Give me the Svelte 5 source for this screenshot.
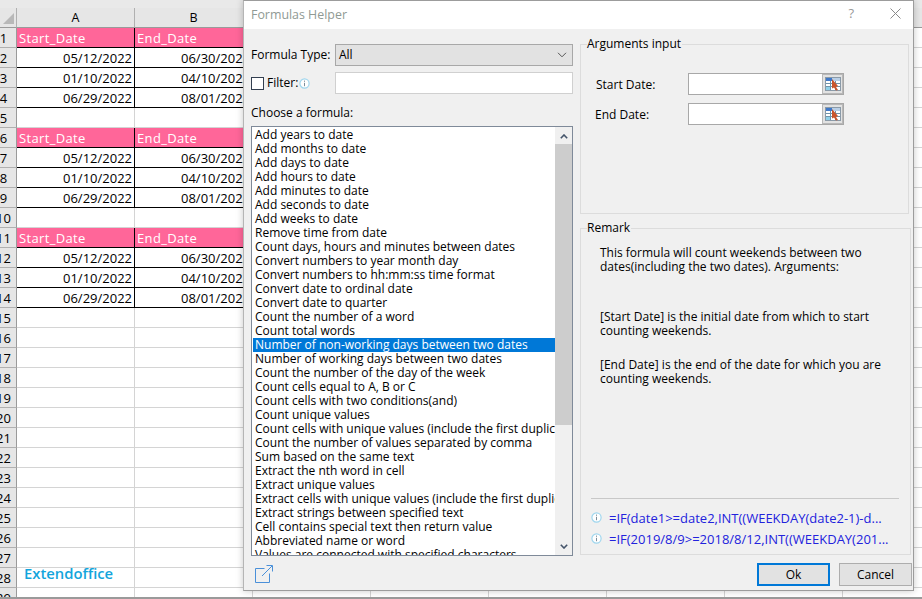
<script>
  const rowsN = Array.from({ length: 29 }, (_, i) => i + 1);
  const colsBehind = Array.from({ length: 6 });
  const tableStarts = [1, 6, 11];
  const data = [['05/12/2022','06/30/2022'],['01/10/2022','04/10/2022'],['06/29/2022','08/01/2022']];
  function cell(r, c) {
    for (const s of tableStarts) {
      if (r === s) return { t: c === 0 ? 'Start_Date' : 'End_Date', k: 'head' };
      if (r > s && r <= s + 3) return { t: data[r - s - 1][c], k: 'val' };
    }
    return { t: '', k: '' };
  }
  const formulas = ['Add years to date','Add months to date','Add days to date','Add hours to date','Add minutes to date','Add seconds to date','Add weeks to date','Remove time from date','Count days, hours and minutes between dates','Convert numbers to year month day','Convert numbers to hh:mm:ss time format','Convert date to ordinal date','Convert date to quarter','Count the number of a word','Count total words','Number of non-working days between two dates','Number of working days between two dates','Count the number of the day of the week','Count cells equal to A, B or C','Count cells with two conditions(and)','Count unique values','Count cells with unique values (include the first duplicate)','Count the number of values separated by comma','Sum based on the same text','Extract the nth word in cell','Extract unique values','Extract cells with unique values (include the first duplicate)','Extract strings between specified text','Cell contains special text then return value','Abbreviated name or word','Values are connected with specified characters'];
</script>

{#snippet calIcon()}
  <svg class="cal" viewBox="0 0 16 16" width="16" height="16">
    <rect x="0.5" y="1.5" width="15" height="13" fill="#fff" stroke="#8a9aa8"/>
    <rect x="1" y="2" width="6" height="3" fill="#3f78c8"/>
    <rect x="7" y="2" width="8" height="3" fill="#b9cfe6"/>
    <path d="M1 7.5h14M1 10.500h14M5.500 5v9M10.500 5v9" stroke="#6f93a8"/>
    <rect x="1" y="11" width="4" height="3" fill="#8fd0e8"/>
    <path d="M7 3l6 7-2 1 2 3-2 .5-2-3-2 1z" fill="#c9552c"/>
  </svg>
{/snippet}

{#snippet infoIcon()}
  <svg class="info" viewBox="0 0 11 11" width="11" height="11">
    <circle cx="5.500" cy="5.500" r="4.600" fill="#fff" stroke="#9fd6ee" stroke-width="1.200"/>
    <path d="M5.500 2.600v1.200M5.500 4.800v3.400" stroke="#7d8d9a" stroke-width="1"/>
  </svg>
{/snippet}

<div class="page">
  <div class="topstrip"></div>
  <div class="sheet">
    <div class="corner"><span class="tri"></span></div>
    <div class="colh">A</div>
    <div class="colh">B</div>
    {#each colsBehind as _}<div class="colh"></div>{/each}

    {#each rowsN as r}
      <div class="rowh"><span>{r}</span></div>
      {#each [0, 1] as c}
        {@const x = cell(r, c)}
        <div class="c {x.k}">{x.t}</div>
      {/each}
      {#each colsBehind as _}<div class="c"></div>{/each}
    {/each}
  </div>
  <div class="botstrip"></div>
  <div class="brand">Extendoffice</div>

  <section class="dialog">
    <header class="titlebar">
      <span class="title">Formulas Helper</span>
      <span class="help">?</span>
      <svg class="close" viewBox="0 0 11 11" width="11" height="11"><path d="M.5.5l10 10M10.500.5l-10 10" stroke="#8a8a8a" fill="none"/></svg>
    </header>
    <div class="body">
      <div class="main">
        <div class="left">
          <div class="line l1">
            <label for="ft">Formula Type:</label>
            <div class="select" id="ft"><span>All</span>
              <svg viewBox="0 0 10 6" width="10" height="6"><path d="M1 .8l4 4 4-4" fill="none" stroke="#555"/></svg>
            </div>
          </div>
          <div class="line l2">
            <div class="filter"><span class="check"></span><span>Filter:</span>{@render infoIcon()}</div>
            <div class="filterinput"></div>
          </div>
          <div class="choose">Choose a formula:</div>
          <div class="list">
            <div class="items">
              {#each formulas as f, i}
                <div class="item" class:sel={i === 15}>{f}</div>
              {/each}
            </div>
            <div class="scroll">
              <svg viewBox="0 0 8 5" width="8" height="5"><path d="M.8 4.200L4 1l3.200 3.200" fill="none" stroke="#44546a" stroke-width="1.600"/></svg>
              <div class="thumb"></div>
              <svg viewBox="0 0 8 5" width="8" height="5"><path d="M.8.8L4 4l3.200-3.200" fill="none" stroke="#44546a" stroke-width="1.600"/></svg>
            </div>
          </div>
          <svg class="pop" viewBox="0 0 18 18" width="18" height="18">
            <path d="M9.500 3.500H.5v14h14V8.500" fill="none" stroke="#4a90d9"/>
            <path d="M11.500.5h6v6M17 1L7 11" fill="none" stroke="#4a90d9"/>
          </svg>
        </div>
        <div class="right">
          <fieldset class="args">
            <legend>Arguments input</legend>
            <div class="arg">
              <span class="lab">Start Date:</span>
              <div class="rangebox"><div class="rangefield"></div><div class="rangebtn">{@render calIcon()}</div></div>
            </div>
            <div class="arg">
              <span class="lab end">End Date:</span>
              <div class="rangebox"><div class="rangefield"></div><div class="rangebtn">{@render calIcon()}</div></div>
            </div>
          </fieldset>
          <fieldset class="remark">
            <legend>Remark</legend>
            <div class="text">
              <p class="p1">This formula will count weekends between two dates(including the two dates). Arguments:</p>
              <p class="p2">[Start Date] is the initial date from which to start counting weekends.</p>
              <p class="p3">[End Date] is the end of the date for which you are counting weekends.</p>
            </div>
            <div class="exprs">
              <div class="expr">{@render infoIcon()}<span>=IF(date1&gt;=date2,INT((WEEKDAY(date2-1)-d...</span></div>
              <div class="expr">{@render infoIcon()}<span>=IF(2019/8/9&gt;=2018/8/12,INT((WEEKDAY(201...</span></div>
            </div>
          </fieldset>
          <div class="buttons">
            <button class="ok">Ok</button>
            <button class="cancel">Cancel</button>
          </div>
        </div>
      </div>
    </div>
  </section>
</div>

<style>
  :global(body) { margin: 0; background: #fff; }
  .page { position: relative; width: 922px; height: 599px; overflow: hidden; font-family: "Open Sans", "Noto Sans", sans-serif; color: #000; }
  .topstrip { height: 8px; background: #e9e9e9; }
  .sheet { display: grid; grid-template-columns: 17px repeat(8, 118px); grid-auto-rows: 20px; height: 589px; overflow: hidden; }
  .botstrip { height: 2px; background: #9a9a9a; }
  .corner { background: #e6e6e6; border-right: 1px solid #b0b0b0; border-bottom: 1px solid #9a9a9a; position: relative; box-sizing: border-box; overflow: hidden; }
  .tri { position: absolute; right: 2px; bottom: 3px; width: 0; height: 0; border-left: 11px solid transparent; border-bottom: 11px solid #b8b8b8; }
  .colh { background: #e6e6e6; border-right: 1px solid #b0b0b0; border-bottom: 1px solid #9a9a9a; box-sizing: border-box; text-align: center; font-size: 12.500px; line-height: 20px; }
  .rowh { background: #e6e6e6; border-right: 1px solid #9a9a9a; border-bottom: 1px solid #b0b0b0; box-sizing: border-box; font-size: 13px; line-height: 21px; display: flex; justify-content: center; padding-right: 9px; white-space: nowrap; overflow: hidden; }
  .rowh span { flex: none; }
  .c { box-sizing: border-box; border-right: 1px solid #d4d4d4; border-bottom: 1px solid #d4d4d4; font-size: 13px; line-height: 21px; padding: 0 2px 0 2px; white-space: nowrap; overflow: hidden; }
  .c.head { background: #ff6699; color: #fff; border-color: #000; text-align: left; letter-spacing: .35px; }
  .c.val { text-align: right; border-color: #000; }
  .brand { position: absolute; left: 24px; top: 563px; color: #12a5dc; font-size: 14.800px; font-weight: 600; line-height: 20px; }

  .dialog { position: absolute; left: 243px; top: 0; width: 671px; height: 591px; box-sizing: border-box; border: 1px solid #9c9c9c; border-left-color: #b5b5b5; background: #f0f0f0; font-size: 12px; line-height: 14px; display: flex; flex-direction: column; box-shadow: 0 0 7px rgba(0,0,0,.22); }
  .titlebar { background: #fff; height: 28px; flex: none; display: flex; align-items: center; padding: 0 12px 1px 7px; box-sizing: border-box; }
  .title { flex: 1; color: #8f9a94; font-size: 12.400px; }
  .help { color: #999; font-size: 13px; margin: 0 36px 4px 0; }
  .close { margin-bottom: 2px; }
  .body { flex: 1; min-height: 0; padding: 15px 2px 0 7px; }
  .main { display: flex; gap: 7px; height: 100%; }
  .left { width: 322px; display: flex; flex-direction: column; flex: none; }
  .line { display: flex; align-items: center; justify-content: space-between; }
  .line label { line-height: 22px; }
  .select { width: 238px; height: 22px; box-sizing: border-box; border: 1px solid #a8a8a8; background: #e2e2e2; display: flex; align-items: center; justify-content: space-between; padding: 0 5px 0 3px; }
  .l2 { margin-top: 6px; }
  .filter { display: flex; align-items: center; gap: 1px; }
  .check { width: 11px; height: 11px; border: 1px solid #333f50; background: #fff; margin-right: 2px; }
  .filterinput { width: 238px; height: 22px; box-sizing: border-box; border: 1px solid #d0d0d0; background: #fff; }
  .choose { margin-top: 12px; line-height: 14px; }
  .list { margin-top: 6px; height: 430px; box-sizing: border-box; border: 1px solid #7f8a99; background: #fff; display: flex; overflow: hidden; }
  .items { flex: 1; min-width: 0; padding: 1px 0 0 1px; overflow: hidden; }
  .item { height: 14px; line-height: 14px; padding-left: 2px; white-space: nowrap; overflow: hidden; }
  .item.sel { background: #0078d7; color: #fff; }
  .scroll { width: 17px; flex: none; background: #f0f0f0; display: flex; flex-direction: column; align-items: center; justify-content: space-between; padding: 7px 0 6px; box-sizing: border-box; position: relative; }
  .thumb { position: absolute; left: 0; right: 0; top: 17px; height: 281px; background: #cdcdcd; }
  .pop { margin-top: 9px; margin-left: 4px; }
  .right { flex: 1; min-width: 0; display: flex; flex-direction: column; }
  fieldset { margin: 0; padding: 0; border: 1px solid #dcdcdc; box-sizing: border-box; min-width: 0; }
  legend { padding: 0 1px 0 0; margin-left: 6px; line-height: 14px; }
  .args { height: 177px; margin: -7px 2px 0 0; padding-top: 22px; }
  .arg { display: flex; align-items: center; height: 22px; margin: 0 0 8px 15px; }
  .lab { width: 92px; flex: none; padding-top: 1px; }
  .lab.end { margin-left: -1px; width: 93px; }
  .rangebox { width: 156px; height: 22px; display: flex; box-sizing: border-box; border: 1px solid #a8a8a8; background: #fff; }
  .rangefield { flex: 1; }
  .rangebtn { width: 21px; background: #e2e2e2; display: flex; align-items: center; justify-content: center; border: 1px solid #b8b8b8; box-sizing: border-box; }
  .remark { height: 334px; margin-top: 7px; padding-top: 11px; }
  .text { height: 252px; margin: 0 19px; }
  .text p { margin: 0; }
  .text .p1 { margin-bottom: 36px; }
  .text .p2 { margin-bottom: 20px; }
  .exprs { margin: 0 11px 0 10px; border-top: 1px solid #c8c8c8; padding: 8px 0 4px; }
  .expr { display: flex; align-items: center; gap: 7px; height: 21px; color: #2222dd; white-space: nowrap; font-size: 13px; }
  .buttons { display: flex; justify-content: flex-end; gap: 9px; margin-top: 8px; margin-right: -1px; }
  button { font: inherit; height: 23px; width: 73px; box-sizing: border-box; background: #e2e2e2; border: 1px solid #adadad; padding: 0; color: #000; }
  .ok { border: 2px solid #0078d7; }
</style>
